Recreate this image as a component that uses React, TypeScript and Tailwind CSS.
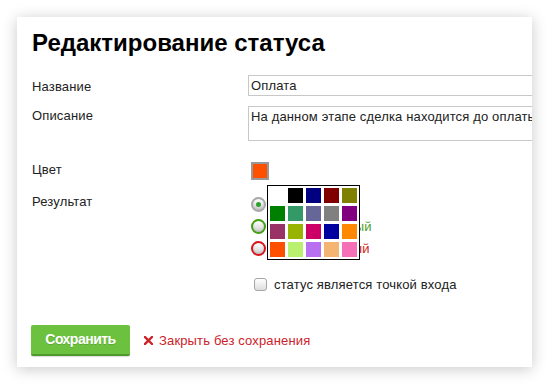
import React from "react";

const palette: string[] = [
  "#ffffff", "#000000", "#000080", "#800000", "#808000",
  "#008000", "#339966", "#666699", "#808080", "#800080",
  "#993366", "#99b400", "#cc0066", "#0000a0", "#ff8800",
  "#ff5000", "#b9f06f", "#b870f0", "#f5b572", "#f570b6",
];

function Radio({ border, checked }: { border: string; checked?: boolean }) {
  return (
    <span
      className={`relative flex h-[15px] w-[15px] shrink-0 items-center justify-center rounded-full border-2 bg-linear-to-b from-white to-[#d0d0d0] shadow-[inset_0_-1px_2px_rgba(0,0,0,0.15)] ${border}`}
    >
      {checked && <span className="h-[5px] w-[5px] rounded-full bg-[#2fa02f]" />}
    </span>
  );
}

export default function App() {
  return (
    <div className="min-h-[384px] bg-white px-[17px] pt-[17px] font-['Liberation_Sans',Arial,sans-serif] text-[13px] tracking-[0.15px] text-[#222]">
      <div className="relative overflow-hidden bg-white pl-[15px] pt-[12px] pb-[11px] shadow-[0_2px_14px_rgba(0,0,0,0.22)]">
        <h1 className="text-[24px] font-bold leading-[28px] tracking-normal text-black">Редактирование статуса</h1>

        <div className="mt-[18px] flex items-start">
          <div className="mt-[4px] w-[216px] shrink-0 leading-[15px]">Название</div>
          <input
            readOnly
            value="Оплата"
            className="h-[21px] w-[400px] shrink-0 border border-[#c8c8c8] bg-white px-[2px] text-[13px] tracking-[0.15px] text-[#222] outline-none"
          />
        </div>

        <div className="mt-[10px] flex items-start">
          <div className="mt-[2px] w-[216px] shrink-0 leading-[15px]">Описание</div>
          <textarea
            readOnly
            value="На данном этапе сделка находится до оплаты"
            className="h-[35px] w-[400px] shrink-0 resize-none overflow-hidden border border-[#c8c8c8] bg-white px-[2px] pt-[2px] text-[13px] leading-[15px] tracking-[0.15px] text-[#222] outline-none"
          />
        </div>

        <div className="mt-[21px] flex items-start">
          <div className="w-[216px] shrink-0 leading-[15px]">Цвет</div>
          <div className="relative">
            <div className="ml-[3px] h-[18px] w-[18px] border-2 border-[#999999] bg-[#ff5000]" />
            <div className="absolute left-[19px] top-[23px] z-10 border border-black bg-white p-[2px]">
              <div className="grid grid-cols-[repeat(5,15px)] gap-[3px]">
                {palette.map((c, i) => (
                  <div key={i} className="h-[15px] w-[15px]" style={{ backgroundColor: c }} />
                ))}
              </div>
            </div>
          </div>
        </div>

        <div className="mt-[17px] flex items-start">
          <div className="-mt-[3px] w-[216px] shrink-0 leading-[15px]">Результат</div>
          <div className="ml-[3px] flex flex-col gap-[7px]">
            <div className="flex items-center gap-[6px] leading-[15px]">
              <Radio border="border-[#a9a9a9]" checked />
              <span>Обычный</span>
            </div>
            <div className="flex items-center gap-[6px] leading-[15px] text-[#4d9e1f]">
              <Radio border="border-[#44a012]" />
              <span>Положительный</span>
            </div>
            <div className="flex items-center gap-[6px] leading-[15px] text-[#d11a1a]">
              <Radio border="border-[#d8161c]" />
              <span>Отрицательный</span>
            </div>
          </div>
        </div>

        <div className="mt-[22px] flex items-center">
          <div className="w-[216px] shrink-0" />
          <div className="ml-[6px] flex items-center gap-[7px]">
            <span className="h-[13px] w-[13px] rounded-[3px] border border-[#a6a6a6] bg-linear-to-b from-white to-[#dedede]" />
            <span className="leading-[13px]">статус является точкой входа</span>
          </div>
        </div>

        <div className="mt-[34px] flex items-center">
          <button className="-ml-[1px] flex h-[31px] w-[99px] items-center justify-center rounded-[2px] border-b-2 border-[#4e9a2c] bg-[#6cc13f] text-[14px] font-bold tracking-[-0.5px] text-white [text-shadow:0_1px_0_rgba(0,0,0,0.15)] shadow-[0_1px_1px_rgba(0,0,0,0.15)]">
            Сохранить
          </button>
          <div className="ml-[14px] flex items-center gap-[6px] text-[#cc2229]">
            <svg width="9" height="9" viewBox="0 0 9 9" className="shrink-0">
              <path d="M1 1L8 8M8 1L1 8" stroke="#cc2229" strokeWidth="2.4" strokeLinecap="square" />
            </svg>
            <span className="leading-[15px]">Закрыть без сохранения</span>
          </div>
        </div>
      </div>
    </div>
  );
}
